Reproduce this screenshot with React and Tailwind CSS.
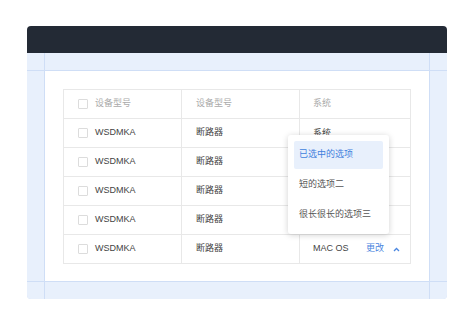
import React from "react";

const rows = [
  { name: "WSDMKA", type: "断路器", sys: "系统" },
  { name: "WSDMKA", type: "断路器", sys: "" },
  { name: "WSDMKA", type: "断路器", sys: "" },
  { name: "WSDMKA", type: "断路器", sys: "" },
];

const options = ["已选中的选项", "短的选项二", "很长很长的选项三"];

function Checkbox() {
  return <span className="w-[10px] h-[10px] border border-[#dcdcdc] rounded-[1px] bg-white mr-[7px] shrink-0" />;
}

function Row({ children }) {
  return <div className="grid grid-cols-[117px_118px_1fr] h-[29px] border-b border-[#e8e8e8]">{children}</div>;
}

function App() {
  return (
    <div
      className="min-h-screen bg-white pt-[26px] pl-[27px]"
      style={{ fontFamily: '"Liberation Sans", "Noto Sans CJK SC", sans-serif' }}
    >
      <div className="w-[420px] rounded-[4px] overflow-hidden">
        <div className="h-[27px] bg-[#232a35]" />
        <div className="grid grid-cols-[17px_1fr_17px] grid-rows-[17px_auto_17px] gap-px bg-[#cfdef6]">
          <div className="bg-[#e8f0fc]" />
          <div className="bg-[#e8f0fc]" />
          <div className="bg-[#e8f0fc]" />
          <div className="bg-[#e8f0fc]" />
          <div className="bg-white pt-[18px] px-[18px] pb-[17px]">
            <div className="relative border-t border-x border-[#e8e8e8] text-[9px]">
              <Row>
                <div className="flex items-center pl-[14px] text-[#aaaaaa]">
                  <Checkbox />
                  设备型号
                </div>
                <div className="flex items-center pl-[14px] border-l border-[#e8e8e8] text-[#aaaaaa]">设备型号</div>
                <div className="flex items-center pl-[13px] border-l border-[#e8e8e8] text-[#aaaaaa]">系统</div>
              </Row>
              {rows.map((r, i) => (
                <Row key={i}>
                  <div className="flex items-center pl-[14px] text-[#444]">
                    <Checkbox />
                    {r.name}
                  </div>
                  <div className="flex items-center pl-[14px] border-l border-[#e8e8e8] text-[#444]">{r.type}</div>
                  <div className="flex items-center pt-[2px] pl-[13px] border-l border-[#e8e8e8] text-[#444]">{r.sys}</div>
                </Row>
              ))}
              <Row>
                <div className="flex items-center pl-[14px] text-[#444]">
                  <Checkbox />
                  WSDMKA
                </div>
                <div className="flex items-center pl-[14px] border-l border-[#e8e8e8] text-[#444]">断路器</div>
                <div className="flex items-center pl-[13px] pr-[10px] border-l border-[#e8e8e8] text-[#444]">
                  MAC OS
                  <span className="ml-auto text-[#4a86e0]">更改</span>
                  <svg className="ml-[9px]" width="7" height="5" viewBox="0 0 7 5" fill="none">
                    <path d="M1 4L3.5 1.5L6 4" stroke="#4a86e0" strokeWidth="1.3" />
                  </svg>
                </div>
              </Row>

              <div className="absolute left-[224px] top-[45px] w-[101px] h-[99px] bg-white rounded-[3px] shadow-[0_1px_6px_rgba(0,0,0,0.18)] pt-[6px] px-[6px] flex flex-col gap-[2px]">
                {options.map((o, i) => (
                  <div
                    key={o}
                    className={
                      "h-[28px] flex items-center pl-[5px] rounded-[2px] " +
                      (i === 0 ? "bg-[#e8f0fc] text-[#3f7fdc]" : "text-[#555]")
                    }
                  >
                    {o}
                  </div>
                ))}
              </div>
            </div>
          </div>
          <div className="bg-[#e8f0fc]" />
          <div className="bg-[#e8f0fc]" />
          <div className="bg-[#e8f0fc]" />
          <div className="bg-[#e8f0fc]" />
        </div>
      </div>
    </div>
  );
}

export default App;
